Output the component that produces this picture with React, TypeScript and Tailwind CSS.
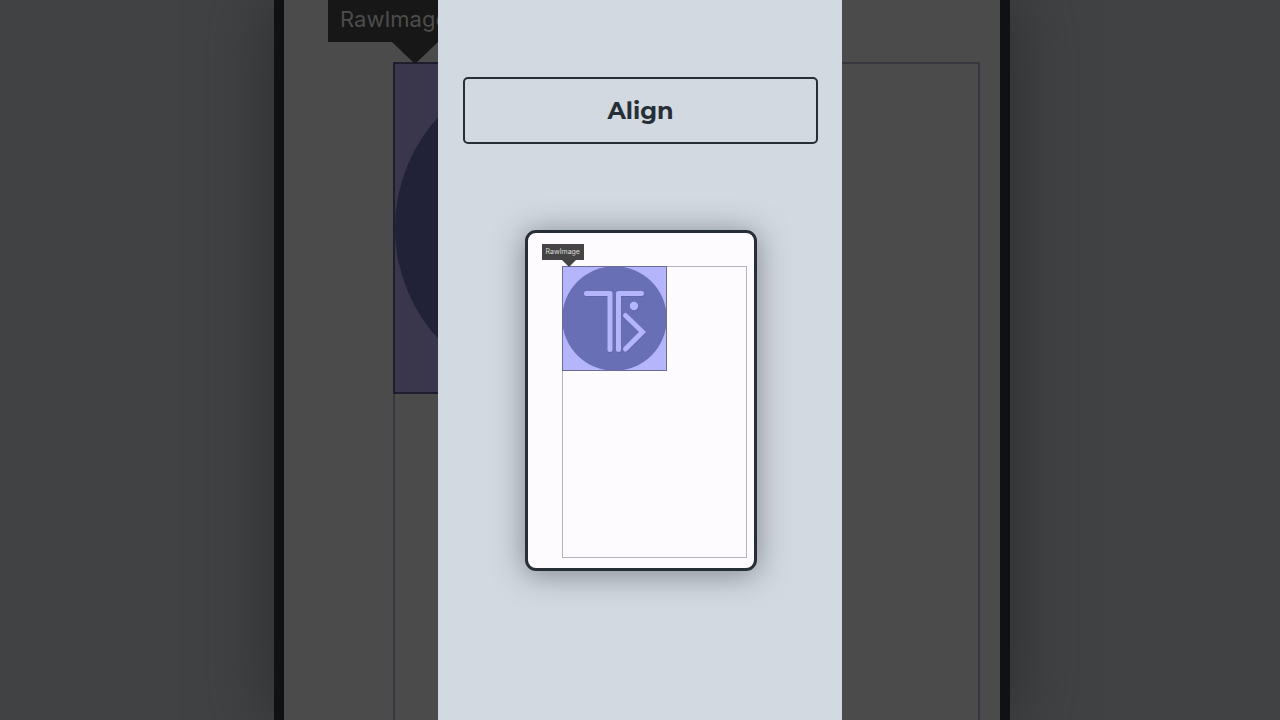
function Backdrop() {
  return (
    <div
      aria-hidden="true"
      className="absolute inset-0 flex justify-center overflow-hidden bg-[#404244] pl-1"
    >
      <div className="w-[736px] shrink-0 border-x-10 border-[#0f1114] bg-[#4b4b4b] pt-[62px] pr-5 pl-[109px] shadow-[0_0_64px_0_#2a2c2e]">
        <div className="relative h-full border-2 border-b-0 border-[#38373f]">
          <div className="absolute -top-0.5 -left-0.5 size-[332px] border-2 border-[#1f1e30] bg-[#3a364b]">
            <div className="size-full rounded-full bg-[#212238]" />
          </div>
          <div className="absolute bottom-full -left-[67px] flex flex-col">
            <span className="bg-[#171717] px-3 pt-6 pb-2.5 font-['Inter',sans-serif] text-[22px] leading-[26px] text-[#4c4c4c]">
              RawImage
            </span>
            <svg className="ml-16 h-[22px] w-[46px]" viewBox="0 0 46 22">
              <path d="M0 0H46L23 22Z" fill="#171717" />
            </svg>
          </div>
        </div>
      </div>
    </div>
  );
}

function Logo() {
  return (
    <svg className="size-[105px]" viewBox="0 0 105 105" role="img" aria-label="Logo">
      <rect width="105" height="105" fill="#b5b5fb" />
      <circle cx="52.5" cy="52.5" r="52.3" fill="#696fb5" />
      <g
        fill="none"
        stroke="#4f559a"
        strokeWidth="5"
        strokeLinecap="round"
        strokeLinejoin="round"
        transform="translate(0.5 0.9)"
        opacity="0.35"
      >
        <path d="M24.5 27.5H48V83.500" />
        <path d="M79.500 27.500H56.500V83.500" />
        <path d="M63.500 49.500L80.500 66L63.500 83" />
        <circle cx="72" cy="40" r="2" />
      </g>
      <g fill="none" stroke="#b5b5fb" strokeWidth="5" strokeLinecap="round">
        <path d="M24.500 27.500H48V83.500" strokeLinejoin="round" />
        <path d="M79.500 27.500H56.500V83.500" strokeLinejoin="round" />
        <path d="M63.500 49.500L80.500 66L63.500 83" strokeLinejoin="miter" />
      </g>
      <circle cx="72" cy="40" r="4.2" fill="#b5b5fb" />
      <rect x="0.5" y="0.5" width="104" height="104" fill="none" stroke="#6a6a9c" />
    </svg>
  );
}

function Device() {
  return (
    <section className="h-[341px] w-[232px] rounded-[11px] border-3 border-[#262e37] bg-[#fefbff] pt-[33px] pr-[7px] pb-2.5 pl-[34px] shadow-[0_3px_30px_0_rgba(50,48,58,0.5)]">
      <div className="relative h-full border border-[#b3b3c0]">
        <div className="absolute -top-px -left-px">
          <Logo />
        </div>
        <div className="absolute bottom-full -left-[21px] flex flex-col">
          <span className="bg-[#444444] px-1 font-['Inter',sans-serif] text-[7px] leading-4 text-[#dddddd]">
            RawImage
          </span>
          <svg className="ml-5 h-[7px] w-3.5" viewBox="0 0 14 7">
            <path d="M0 0H14L7 7Z" fill="#444444" />
          </svg>
        </div>
      </div>
    </section>
  );
}

export default function App() {
  return (
    <div className="relative flex min-h-screen justify-center antialiased">
      <Backdrop />
      <main className="relative flex w-[404px] max-w-full flex-col items-center gap-[86px] bg-[#d2d9e0] pt-[77px] pr-6 pb-12 pl-[25px]">
        <h1 className="w-full rounded-[5px] border-2 border-[#262e37] py-4 text-center font-['Montserrat','Inter',sans-serif] text-2xl leading-[31px] font-bold text-[#262e37]">
          Align
        </h1>
        <Device />
      </main>
    </div>
  );
}
